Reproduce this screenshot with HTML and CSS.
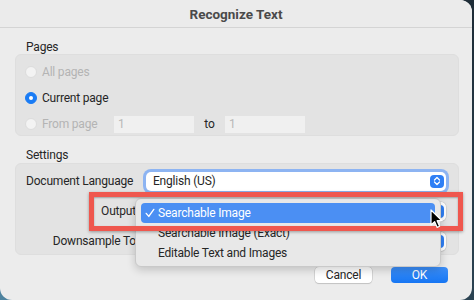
FILE: index.html
```html
<!DOCTYPE html>
<html>
<head>
<meta charset="utf-8">
<link rel="stylesheet" href="styles.css">
</head>
<body>
<div class="window">
  <div class="titlebar">Recognize Text</div>
  <div class="content">
    <div class="section-label pages-label">Pages</div>
    <div class="group pages">
      <div class="row disabled"><span class="radio"></span><span>All pages</span></div>
      <div class="row"><span class="radio on"></span><span>Current page</span></div>
      <div class="row disabled"><span class="radio"></span><span class="from">From page</span><span class="field">1</span><span class="to">to</span><span class="field">1</span></div>
    </div>
    <div class="section-label settings-label">Settings</div>
    <div class="group settings">
      <div class="srow"><span class="lbl">Document Language</span><div class="popup focus"><span>English (US)</span><span class="stepper"><svg width="8" height="10" viewBox="0 0 8 10"><path d="M1.5 4 L4 1.5 L6.5 4 M1.5 6 L4 8.5 L6.5 6" fill="none" stroke="#fff" stroke-width="1.3" stroke-linecap="round" stroke-linejoin="round"/></svg></span></div></div>
      <div class="srow"><span class="lbl">Output</span><div class="popup"><span></span><span class="stepper"></span></div></div>
      <div class="srow"><span class="lbl">Downsample To</span><div class="popup"><span></span><span class="stepper"></span></div></div>
    </div>
    <div class="buttons">
      <span class="btn cancel">Cancel</span>
      <span class="btn ok">OK</span>
    </div>
  </div>
  <div class="menu">
    <div class="item sel"><svg class="check" width="10" height="10" viewBox="0 0 10 10"><path d="M1.2 5.4 L3.8 8.4 L8.8 1.4" fill="none" stroke="#fff" stroke-width="1.4" stroke-linecap="round" stroke-linejoin="round"/></svg>Searchable Image</div>
    <div class="item">Searchable Image (Exact)</div>
    <div class="item">Editable Text and Images</div>
  </div>
  <div class="callout"></div>
  <svg class="cursor" width="14" height="20" viewBox="0 0 14 20"><path d="M1 1 L1 16 L4.6 12.6 L7.2 18.4 L9.6 17.3 L7.1 11.7 L12 11.7 Z" fill="#000" stroke="#fff" stroke-width="1.2" stroke-linejoin="round"/></svg>
</div>
</body>
</html>
```
FILE: styles.css
```css
html, body { margin: 0; padding: 0; }
body {
  width: 474px; height: 300px; overflow: hidden;
  background: linear-gradient(225deg, #1e2c37 0%, #2f4a5a 50%, #4f84a0 100%);
  font-family: Roboto, "Noto Sans", sans-serif;
  font-size: 12px;
  letter-spacing: -0.2px;
  color: #262626;
}
.window {
  position: relative;
  width: 472px; height: 300px;
  background: #ececec;
  border-radius: 0 12px 12px 12px;
  overflow: hidden;
}
.titlebar {
  height: 28px; box-sizing: border-box;
  border-bottom: 1px solid #d4d4d4;
  text-align: center; line-height: 28px;
  font-weight: 700; font-size: 13.5px; letter-spacing: 0; color: #4a4a4a;
  background: #ebebeb;
}
.content { padding: 0 13px 0 15px; }
.section-label { padding-left: 11px; height: 16px; line-height: 16px; }
.pages-label { margin-top: 11px; margin-bottom: -1px; }
.settings-label { margin-top: 11px; margin-bottom: 0; }
.group {
  background: #e3e3e3;
  border: 1px solid #dedede;
  border-radius: 6px;
  width: 444px; box-sizing: border-box;
}
.pages { padding-top: 4px; height: 82px; }
.row { display: flex; align-items: center; height: 26px; padding-left: 9px; }
.row.disabled { color: #b4b4b4; }
.radio {
  width: 12px; height: 12px; border-radius: 50%;
  box-sizing: border-box;
  background: #f3f3f3; border: 1px solid #dcdcdc;
  margin-right: 5px; position: relative;
}
.radio.on { background: #1a7cf5; border-color: #1a7cf5; }
.radio.on::after {
  content: ""; position: absolute; left: 3px; top: 3px;
  width: 4px; height: 4px; border-radius: 50%; background: #fff;
}
.from { width: 72px; }
.field {
  width: 80px; height: 17px; line-height: 17px; box-sizing: border-box;
  background: #f0f0f0; padding-left: 4px; color: #b8b8b8;
}
.to { color: #262626; width: 31px; text-align: center; }
.settings { padding-top: 2px; height: 92px; }
.srow { display: flex; align-items: center; height: 30px; }
.lbl { width: 120px; text-align: right; margin-right: 10px; white-space: nowrap; }
.srow:first-child .lbl { text-align: left; padding-left: 10px; box-sizing: border-box; }
.popup {
  width: 300px; height: 19px; box-sizing: border-box;
  background: #fff; border-radius: 5px;
  display: flex; align-items: center; justify-content: space-between;
  padding: 0 2px 0 7px;
  box-shadow: 0 0 0 0.5px #c4c4c4, 0 1px 1px rgba(0,0,0,0.1);
}
.popup.focus { box-shadow: 0 0 0 3px #8db4f2; }
.stepper {
  width: 14px; height: 13px; border-radius: 4px; background: #2f7ff5;
  display: flex; align-items: center; justify-content: center;
}
.buttons { display: flex; justify-content: flex-end; gap: 19px; margin-top: 12px; padding-right: 11px; }
.btn {
  width: 57px; height: 16px; line-height: 16px; text-align: center;
  border-radius: 4px;
}
.cancel { background: #fff; box-shadow: 0 0 0 0.5px #bdbdbd, 0 1px 1px rgba(0,0,0,0.15); }
.ok { background: linear-gradient(#3d8ff8, #1676f3); color: #fff; }
.menu {
  position: absolute; left: 135px; top: 198px;
  width: 306px; height: 69px; box-sizing: border-box;
  padding: 4px 5px;
  background: #e8e8e8;
  border: 1px solid #c9c9c9;
  border-radius: 6px;
  box-shadow: 0 3px 8px rgba(0,0,0,0.18);
}
.item { height: 20px; line-height: 20px; padding-left: 17px; border-radius: 4px; position: relative; }
.item.sel { background: #4b8ff3; color: #fff; }
.check { position: absolute; left: 4px; top: 5px; }
.callout {
  position: absolute; left: 89px; top: 192px;
  width: 374px; height: 39px; box-sizing: border-box;
  border: 5px solid #ef574e;
  box-shadow: 0 1px 3px rgba(0,0,0,0.35), inset 0 1px 2px rgba(0,0,0,0.3);
}
.cursor { position: absolute; left: 430px; top: 209px; }
```
